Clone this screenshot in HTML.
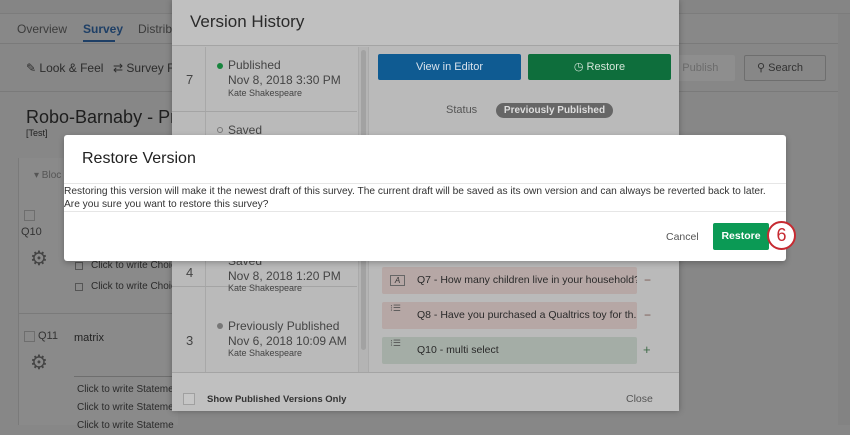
<!DOCTYPE html>
<html><head><style>
*{margin:0;padding:0;box-sizing:border-box}
html,body{background:#878787}
body{width:850px;height:425px;overflow:hidden;position:relative;font-family:"Liberation Sans",sans-serif;color:#333}
.a{position:absolute}
.q{white-space:nowrap;overflow:hidden}
</style></head><body>
<div class="a" style="left:0;top:0;width:850px;height:14px;background:#858585;border-bottom:1px solid #7c7c7c"></div>
<div class="a" style="left:0;top:14px;width:838px;height:29px;background:#888"></div>
<div class="a" style="left:17px;top:22px;font-size:12px;color:#3c3c3c">Overview</div>
<div class="a" style="left:83px;top:22px;font-size:12px;color:#1e3f66;font-weight:bold">Survey</div>
<div class="a" style="left:83px;top:40px;width:32px;height:2px;background:#1e3f66"></div>
<div class="a" style="left:138px;top:22px;font-size:12px;color:#3c3c3c">Distribu</div>
<div class="a" style="left:0;top:43px;width:838px;height:1px;background:#7a7a7a"></div>
<div class="a" style="left:26px;top:61px;font-size:12px;color:#2c2c2c">✎ Look &amp; Feel</div>
<div class="a" style="left:113px;top:61px;font-size:12px;color:#2c2c2c">⇄ Survey F</div>
<div class="a" style="left:0;top:91px;width:838px;height:1px;background:#7a7a7a"></div>
<div class="a" style="left:667px;top:55px;width:68px;height:26px;background:#8e8e8e;border-radius:2px;font-size:11px;color:#6c6c6c;line-height:26px">nd Publish</div>
<div class="a" style="left:744px;top:55px;width:82px;height:26px;border:1px solid #6e6e6e;border-radius:2px;font-size:11px;color:#333;line-height:24px;padding-left:12px">⚲ Search</div>
<div class="a" style="left:838px;top:14px;width:12px;height:411px;background:#838383"></div>
<div class="a" style="left:26px;top:107px;font-size:18px;color:#1e1e1e">Robo-Barnaby - Prep</div>
<div class="a" style="left:26px;top:128px;font-size:9px;color:#222">[Test]</div>
<div class="a" style="left:18px;top:158px;width:160px;height:267px;border-left:1px solid #7a7a7a;background:#8a8a8a"></div>
<div class="a" style="left:34px;top:170px;font-size:10px;color:#555">▾ Bloc</div>
<div class="a" style="left:24px;top:210px;width:11px;height:11px;border:1px solid #6e6e6e"></div>
<div class="a" style="left:21px;top:226px;font-size:11px;color:#333">Q10</div>
<div class="a" style="left:30px;top:246px;font-size:20px;color:#444">⚙</div>
<div class="a" style="left:75px;top:262px;width:8px;height:8px;border:1px solid #555"></div>
<div class="a" style="left:91px;top:260px;font-size:10px;color:#2a2a2a">Click to write Choic</div>
<div class="a" style="left:75px;top:283px;width:8px;height:8px;border:1px solid #555"></div>
<div class="a" style="left:91px;top:281px;font-size:10px;color:#2a2a2a">Click to write Choic</div>
<div class="a" style="left:18px;top:313px;width:160px;height:1px;background:#7a7a7a"></div>
<div class="a" style="left:24px;top:331px;width:11px;height:11px;border:1px solid #6e6e6e"></div>
<div class="a" style="left:38px;top:330px;font-size:11px;color:#333">Q11</div>
<div class="a" style="left:74px;top:332px;font-size:11px;color:#222">matrix</div>
<div class="a" style="left:30px;top:350px;font-size:20px;color:#444">⚙</div>
<div class="a" style="left:74px;top:376px;width:100px;height:1px;background:#6e6e6e"></div>
<div class="a" style="left:77px;top:381px;font-size:10px;color:#2a2a2a;line-height:18px">Click to write Stateme<br>Click to write Stateme<br>Click to write Stateme</div>

<div class="a" style="left:172px;top:0;width:507px;height:411px;background:#bababa;box-shadow:0 0 6px rgba(0,0,0,.3)">
 <div class="a" style="left:0;top:0;width:507px;height:46px;background:#c0c0c0;border-bottom:1px solid #a4a4a4"></div>
 <div class="a" style="left:18px;top:12px;font-size:17px;color:#2a2a2a">Version History</div>
 <div class="a" style="left:33px;top:47px;width:1px;height:325px;background:#a8a8a8"></div>
 <div class="a" style="left:0;top:111px;width:185px;height:1px;background:#a4a4a4"></div>
 <div class="a" style="left:0;top:286px;width:185px;height:1px;background:#a4a4a4"></div>
 <div class="a" style="left:14px;top:72px;font-size:13px;color:#444">7</div>
 <div class="a" style="left:45px;top:63px;width:6px;height:6px;border-radius:50%;background:#17843d"></div>
 <div class="a" style="left:56px;top:58px;font-size:12px;color:#444;line-height:15px">Published<br>Nov 8, 2018 3:30 PM</div>
 <div class="a" style="left:56px;top:88px;font-size:9px;color:#444">Kate Shakespeare</div>
 <div class="a" style="left:45px;top:127px;width:6px;height:6px;border-radius:50%;border:1px solid #777"></div>
 <div class="a" style="left:56px;top:123px;font-size:12px;color:#444">Saved</div>
 <div class="a" style="left:14px;top:265px;font-size:13px;color:#444">4</div>
 <div class="a" style="left:56px;top:254px;font-size:12px;color:#444;line-height:15px">Saved<br>Nov 8, 2018 1:20 PM</div>
 <div class="a" style="left:56px;top:283px;font-size:9px;color:#444">Kate Shakespeare</div>
 <div class="a" style="left:14px;top:333px;font-size:13px;color:#444">3</div>
 <div class="a" style="left:45px;top:323px;width:6px;height:6px;border-radius:50%;background:#777"></div>
 <div class="a" style="left:56px;top:319px;font-size:12px;color:#444;line-height:15px">Previously Published<br>Nov 6, 2018 10:09 AM</div>
 <div class="a" style="left:56px;top:348px;font-size:9px;color:#444">Kate Shakespeare</div>
 <div class="a" style="left:186px;top:47px;width:11px;height:325px;background:#b4b4b4;border-left:1px solid #aaa;border-right:1px solid #aaa"></div>
 <div class="a" style="left:189px;top:50px;width:5px;height:300px;border-radius:3px;background:#a2a2a2"></div>
 <div class="a" style="left:206px;top:54px;width:143px;height:26px;background:#0f5b92;border-radius:2px;color:#d8e2ec;font-size:11px;text-align:center;line-height:26px">View in Editor</div>
 <div class="a" style="left:356px;top:54px;width:143px;height:26px;background:#0e6e3c;border-radius:2px;color:#d5e6da;font-size:11px;text-align:center;line-height:26px">◷ Restore</div>
 <div class="a" style="left:274px;top:104px;font-size:11px;color:#555">Status</div>
 <div class="a" style="left:324px;top:103px;width:117px;height:15px;background:#666;border-radius:8px;color:#ddd;font-size:10px;font-weight:bold;text-align:center;line-height:15px">Previously Published</div>
 <div class="a q" style="left:210px;top:267px;width:255px;height:27px;background:#b6a7a5;border-radius:2px;font-size:10.5px;color:#2a2a2a;line-height:27px;padding-left:35px">Q7 - How many children live in your household?</div>
 <div class="a" style="left:218px;top:275px;width:15px;height:11px;border:1px solid #666;font-size:8px;font-style:italic;text-align:center;line-height:9px">A</div>
 <div class="a" style="left:472px;top:273px;font-size:12px;color:#7a5a52">−</div>
 <div class="a q" style="left:210px;top:302px;width:255px;height:27px;background:#b6a7a5;border-radius:2px;font-size:10.5px;color:#2a2a2a;line-height:27px;padding-left:35px">Q8 - Have you purchased a Qualtrics toy for th...</div>
 <div class="a" style="left:218px;top:305px;font-size:9px;color:#555;line-height:7px">⁝☰</div>
 <div class="a" style="left:472px;top:308px;font-size:12px;color:#7a5a52">−</div>
 <div class="a q" style="left:210px;top:337px;width:255px;height:27px;background:#a4ada6;border-radius:2px;font-size:10.5px;color:#2a2a2a;line-height:27px;padding-left:35px">Q10 - multi select</div>
 <div class="a" style="left:218px;top:340px;font-size:9px;color:#555;line-height:7px">⁝☰</div>
 <div class="a" style="left:471px;top:342px;font-size:13px;color:#3f6a48">+</div>
 <div class="a" style="left:0;top:372px;width:507px;height:39px;background:#c0c0c0;border-top:1px solid #a4a4a4"></div>
 <div class="a" style="left:11px;top:393px;width:12px;height:12px;border:1px solid #a0a0a0;background:#c6c6c6"></div>
 <div class="a" style="left:35px;top:394px;font-size:9.5px;font-weight:bold;color:#333">Show Published Versions Only</div>
 <div class="a" style="left:454px;top:393px;font-size:10.5px;color:#555">Close</div>
</div>

<div class="a" style="left:64px;top:135px;width:722px;height:126px;background:#fff;border-radius:3px;box-shadow:0 2px 6px rgba(0,0,0,.25)">
 <div class="a" style="left:18px;top:15px;font-size:16px;color:#222">Restore Version</div>
 <div class="a" style="left:0;top:48px;width:722px;height:1px;background:#e6e6e6"></div>
 <div class="a" style="left:0;top:50px;font-size:10.2px;color:#333;line-height:13px;white-space:nowrap">Restoring this version will make it the newest draft of this survey. The current draft will be saved as its own version and can always be reverted back to later.<br>Are you sure you want to restore this survey?</div>
 <div class="a" style="left:0;top:76px;width:722px;height:1px;background:#e6e6e6"></div>
 <div class="a" style="left:602px;top:96px;font-size:10.5px;color:#555">Cancel</div>
 <div class="a" style="left:649px;top:88px;width:56px;height:27px;background:#0b9a55;border-radius:2px;color:#fff;font-size:10.5px;font-weight:bold;text-align:center;line-height:27px">Restore</div>
</div>
<div class="a" style="left:767px;top:221px;width:29px;height:29px;border-radius:50%;border:2px solid #c62a31;background:#fff;color:#c62a31;font-size:18px;text-align:center;line-height:25px">6</div>
</body></html>
